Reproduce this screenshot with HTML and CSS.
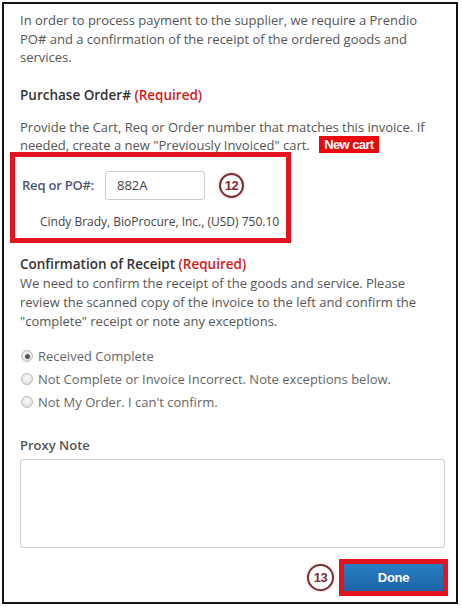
FILE: index.html
```html
<!DOCTYPE html>
<html>
<head>
<meta charset="utf-8">
<link rel="stylesheet" href="styles.css">
</head>
<body>
<div class="frame">
  <p class="intro">In order to process payment to the supplier, we require a Prendio PO# and a confirmation of the receipt of the ordered goods and services.</p>

  <h3 class="heading">Purchase Order# <span class="req">(Required)</span></h3>
  <p class="desc desc-po">Provide the Cart, Req or Order number that matches this invoice. If needed, create a new "Previously Invoiced" cart. <span class="badge">New cart</span></p>

  <div class="po-box">
    <div class="po-row">
      <label class="po-label">Req or PO#:</label>
      <div class="po-input">882A</div>
      <span class="step step-12">12</span>
    </div>
    <div class="po-match">Cindy Brady, BioProcure, Inc., (USD) 750.10</div>
  </div>

  <h3 class="heading heading-conf">Confirmation of Receipt <span class="req">(Required)</span></h3>
  <p class="desc desc-conf">We need to confirm the receipt of the goods and service. Please review the scanned copy of the invoice to the left and confirm the "complete" receipt or note any exceptions.</p>

  <ul class="radios">
    <li><span class="radio checked"></span>Received Complete</li>
    <li><span class="radio"></span>Not Complete or Invoice Incorrect. Note exceptions below.</li>
    <li><span class="radio"></span>Not My Order. I can't confirm.</li>
  </ul>

  <div class="note-label">Proxy Note</div>
  <div class="note-box"></div>

  <div class="actions">
    <span class="step step-13">13</span>
    <div class="done-outline"><button class="done">Done</button></div>
  </div>
</div>
</body>
</html>
```
FILE: styles.css
```css
html, body {
  margin: 0;
  padding: 0;
  background: #fff;
}
body {
  font-family: "Open Sans", "Noto Sans", sans-serif;
  font-size: 13px;
  color: #555;
}
.frame {
  box-sizing: border-box;
  margin: 2px 0 0 2px;
  width: 456px;
  height: 602px;
  border: 2px solid #111;
  padding: 7px 14px 0 16px;
}
p { margin: 0; }
.intro {
  line-height: 18.5px;
}
.heading {
  margin: 18px 0 0;
  font-size: 13.5px;
  font-weight: 600;
  color: #333;
  line-height: 20px;
}
.req {
  color: #d21a1a;
  font-weight: 600;
}
.desc {
  line-height: 18.5px;
}
.desc-po {
  margin-top: 13px;
  height: 37px;
}
.badge {
  display: inline-block;
  background: #e8080e;
  color: #fff;
  font-family: "Liberation Sans", Arial, sans-serif;
  font-weight: bold;
  font-size: 13px;
  letter-spacing: -0.6px;
  line-height: 17px;
  padding: 0 5px;
  margin-left: 6px;
  vertical-align: 1px;
}
.po-box {
  box-sizing: border-box;
  margin: -3px 0 0 -10px;
  width: 281px;
  height: 91px;
  border: 5px solid #e3141f;
  padding: 14px 0 0 7px;
}
.po-row {
  display: flex;
  align-items: center;
}
.po-label {
  font-weight: 600;
  color: #4a5670;
  width: 83px;
  letter-spacing: -0.2px;
}
.po-input {
  box-sizing: border-box;
  width: 100px;
  height: 29px;
  border: 1px solid #ccc;
  border-radius: 3px;
  padding: 0 0 0 11px;
  line-height: 26px;
  color: #444;
}
.step {
  box-sizing: border-box;
  display: inline-flex;
  align-items: center;
  justify-content: center;
  width: 25px;
  height: 25px;
  border: 2.5px solid #7b2d2f;
  border-radius: 50%;
  color: #7b2d2f;
  font-family: "Liberation Sans", Arial, sans-serif;
  font-weight: bold;
  font-size: 13px;
  letter-spacing: -0.5px;
  box-shadow: 0 0 2px 1px #f6dcdc;
}
.step-12 {
  margin-left: 14px;
}
.po-match {
  margin: 13px 0 0 18px;
  font-size: 12px;
  color: #444;
}
.heading-conf {
  margin-top: 11px;
}
.desc-conf {
  margin-top: 0;
  line-height: 19px;
}
.radios {
  list-style: none;
  margin: 14px 0 0 0;
  padding: 0;
}
.radios li {
  display: flex;
  align-items: center;
  height: 23px;
  color: #666;
}
.radio {
  box-sizing: border-box;
  width: 12px;
  height: 12px;
  border-radius: 50%;
  border: 1px solid #bbb;
  background: radial-gradient(circle at 50% 40%, #fafafa, #d8d8d8);
  margin: 0 5px 0 1px;
  position: relative;
}
.radio.checked::after {
  content: "";
  position: absolute;
  left: 2.5px;
  top: 2.5px;
  width: 5px;
  height: 5px;
  border-radius: 50%;
  background: #555;
}
.note-label {
  margin-top: 21px;
  font-weight: 600;
  color: #555;
  line-height: 20px;
}
.note-box {
  box-sizing: border-box;
  margin-top: 4px;
  width: 425px;
  height: 89px;
  border: 1px solid #ccc;
  border-radius: 3px;
}
.actions {
  display: flex;
  justify-content: flex-end;
  align-items: center;
  margin-top: 11px;
  margin-right: -6px;
  gap: 5px;
}
.step-13 {
  width: 27px;
  height: 27px;
}
.done-outline {
  box-sizing: border-box;
  width: 109px;
  height: 37px;
  border: 5px solid #e3141f;
  background: #fff;
  padding: 0;
}
.done {
  display: block;
  width: 100%;
  height: 100%;
  border: 0;
  margin: 0;
  background: linear-gradient(#2a7ec4, #1b64a6);
  color: #fff;
  font-family: "Liberation Sans", Arial, sans-serif;
  font-weight: bold;
  font-size: 13px;
  letter-spacing: -0.3px;
}
```
